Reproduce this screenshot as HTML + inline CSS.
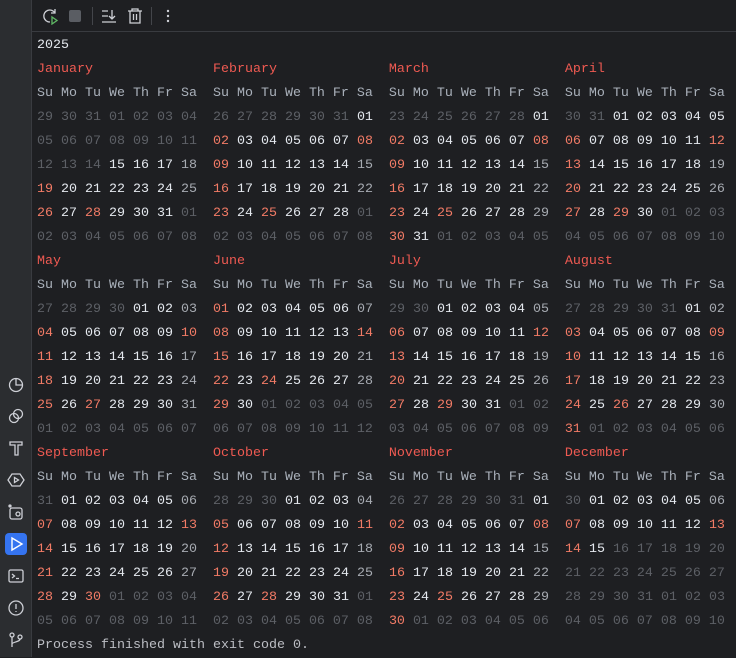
<!DOCTYPE html>
<html><head><meta charset="utf-8"><style>
html,body{margin:0;padding:0;width:736px;height:657px;overflow:hidden;background:#1e1f22;}
#side{position:absolute;left:0;top:0;width:31px;height:657px;background:#2b2d30;border-right:1px solid #393b40;}
#tb{position:absolute;left:32px;top:0;width:704px;height:31px;border-bottom:1px solid #393b40;background:#1e1f22;}
pre{position:absolute;left:37px;top:34px;margin:0;font-family:"Liberation Mono",monospace;font-size:13.333px;line-height:24px;color:#bcbec4;}
g{color:#5d6066}w{color:#e4e8ee}r{color:#f27b66}v{color:#a7abb2}
.m{color:#ef5a52}.h{color:#aab1bb}.y{color:#e4e8ee}
svg{position:absolute;}
</style></head><body>
<div id="side">
<svg style="left:7px;top:376px" width="18" height="18" viewBox="0 0 18 18" fill="none" stroke="#ced0d6" stroke-width="1.3"><circle cx="9" cy="9" r="6.5"/><path d="M9 2.5V9H15.5"/></svg>
<svg style="left:7px;top:407px" width="18" height="18" viewBox="0 0 18 18" fill="none" stroke="#ced0d6" stroke-width="1.3"><circle cx="11" cy="7" r="4.5"/><circle cx="7" cy="11" r="4.5"/></svg>
<svg style="left:7px;top:439px" width="18" height="18" viewBox="0 0 18 18" fill="none" stroke="#ced0d6" stroke-width="1.3"><path d="M3 3H15V6H11V16H8V6H3Z"/></svg>
<svg style="left:7px;top:471px" width="18" height="18" viewBox="0 0 18 18" fill="none" stroke="#ced0d6" stroke-width="1.3"><path d="M5 3H13L17 9L13 15H5L1 9Z"/><path d="M7.5 6.5V11.5L11.5 9Z"/></svg>
<svg style="left:7px;top:503px" width="18" height="18" viewBox="0 0 18 18" fill="none" stroke="#ced0d6" stroke-width="1.3"><rect x="3" y="5" width="12" height="11" rx="2"/><circle cx="11" cy="11" r="2"/><circle cx="3" cy="3" r="1" fill="#ced0d6"/></svg>
<div style="position:absolute;left:5px;top:533px;width:22px;height:22px;background:#3574f0;border-radius:4px"></div>
<svg style="left:7px;top:535px" width="18" height="18" viewBox="0 0 18 18" fill="none" stroke="#fff" stroke-width="1.4"><path d="M5 3V15L15 9Z"/></svg>
<svg style="left:7px;top:567px" width="18" height="18" viewBox="0 0 18 18" fill="none" stroke="#ced0d6" stroke-width="1.3"><rect x="2" y="3" width="14" height="12" rx="1.5"/><path d="M5 7L7.5 9L5 11M9 11.5H12"/></svg>
<svg style="left:7px;top:599px" width="18" height="18" viewBox="0 0 18 18" fill="none" stroke="#ced0d6" stroke-width="1.3"><circle cx="9" cy="9" r="7"/><path d="M9 5V10M9 12V13"/></svg>
<svg style="left:7px;top:631px" width="18" height="18" viewBox="0 0 18 18" fill="none" stroke="#ced0d6" stroke-width="1.3"><circle cx="5" cy="4" r="2"/><circle cx="13" cy="6" r="2"/><path d="M5 6V16M13 8C13 11 5 11 5 13"/></svg>
</div>
<div id="tb">
<svg style="left:9px;top:7px" width="18" height="18" viewBox="0 0 18 18" fill="none" stroke-width="1.3"><path d="M14 6A6 6 0 1 0 9 15" stroke="#ced0d6"/><path d="M14 2V6H10" stroke="#ced0d6"/><path d="M11 10V17L16 13.5Z" stroke="#5fb865"/></svg>
<div style="position:absolute;left:37px;top:10px;width:12px;height:12px;background:#5a5d63;border-radius:2px"></div>
<div style="position:absolute;left:60px;top:7px;width:1px;height:18px;background:#43454a"></div>
<svg style="left:68px;top:7px" width="18" height="18" viewBox="0 0 18 18" fill="none" stroke="#ced0d6" stroke-width="1.3"><path d="M2 4H8M2 9H8M2 15H16M12 3V12M9 9L12 12L15 9"/></svg>
<svg style="left:94px;top:7px" width="18" height="18" viewBox="0 0 18 18" fill="none" stroke="#ced0d6" stroke-width="1.3"><path d="M2 4H16M6 4V2H12V4M4 4V16H14V4M7.5 7V13M10.5 7V13"/></svg>
<div style="position:absolute;left:119px;top:7px;width:1px;height:18px;background:#43454a"></div>
<svg style="left:127px;top:7px" width="18" height="18" viewBox="0 0 18 18" fill="#ced0d6"><circle cx="9" cy="4" r="1.2"/><circle cx="9" cy="9" r="1.2"/><circle cx="9" cy="14" r="1.2"/></svg>
</div>
<pre><span class="y">2025</span>
<span class="m">January               February              March                 April</span>
<span class="h">Su Mo Tu We Th Fr Sa  Su Mo Tu We Th Fr Sa  Su Mo Tu We Th Fr Sa  Su Mo Tu We Th Fr Sa</span>
<g>29 30 31 01 02 03 04  26 27 28 29 30 31 </g><w>01</w>  <g>23 24 25 26 27 28 </g><w>01</w>  <g>30 31 </g><w>01 02 03 04 05</w>
<g>05 06 07 08 09 10 11</g>  <r>02</r> <w>03 04 05 06 07</w> <r>08</r>  <r>02</r> <w>03 04 05 06 07</w> <r>08</r>  <r>06</r> <w>07 08 09 10 11</w> <r>12</r>
<g>12 13 14</g> <w>15 16 17</w> <v>18</v>  <r>09</r> <w>10 11 12 13 14</w> <v>15</v>  <r>09</r> <w>10 11 12 13 14</w> <v>15</v>  <r>13</r> <w>14 15 16 17 18</w> <v>19</v>
<r>19</r> <w>20 21 22 23 24</w> <v>25</v>  <r>16</r> <w>17 18 19 20 21</w> <v>22</v>  <r>16</r> <w>17 18 19 20 21</w> <v>22</v>  <r>20</r> <w>21 22 23 24 25</w> <v>26</v>
<r>26</r> <w>27</w> <r>28</r> <w>29 30 31</w> <g>01</g>  <r>23</r> <w>24</w> <r>25</r> <w>26 27 28</w> <g>01</g>  <r>23</r> <w>24</w> <r>25</r> <w>26 27 28</w> <v>29</v>  <r>27</r> <w>28</w> <r>29</r> <w>30</w> <g>01 02 03</g>
<g>02 03 04 05 06 07 08  02 03 04 05 06 07 08</g>  <r>30</r> <w>31</w> <g>01 02 03 04 05  04 05 06 07 08 09 10</g>
<span class="m">May                   June                  July                  August</span>
<span class="h">Su Mo Tu We Th Fr Sa  Su Mo Tu We Th Fr Sa  Su Mo Tu We Th Fr Sa  Su Mo Tu We Th Fr Sa</span>
<g>27 28 29 30</g> <w>01 02</w> <v>03</v>  <r>01</r> <w>02 03 04 05 06</w> <v>07</v>  <g>29 30</g> <w>01 02 03 04</w> <v>05</v>  <g>27 28 29 30 31</g> <w>01</w> <v>02</v>
<r>04</r> <w>05 06 07 08 09</w> <r>10</r>  <r>08</r> <w>09 10 11 12 13</w> <r>14</r>  <r>06</r> <w>07 08 09 10 11</w> <r>12</r>  <r>03</r> <w>04 05 06 07 08</w> <r>09</r>
<r>11</r> <w>12 13 14 15 16</w> <v>17</v>  <r>15</r> <w>16 17 18 19 20</w> <v>21</v>  <r>13</r> <w>14 15 16 17 18</w> <v>19</v>  <r>10</r> <w>11 12 13 14 15</w> <v>16</v>
<r>18</r> <w>19 20 21 22 23</w> <v>24</v>  <r>22</r> <w>23</w> <r>24</r> <w>25 26 27</w> <v>28</v>  <r>20</r> <w>21 22 23 24 25</w> <v>26</v>  <r>17</r> <w>18 19 20 21 22</w> <v>23</v>
<r>25</r> <w>26</w> <r>27</r> <w>28 29 30</w> <v>31</v>  <r>29</r> <w>30</w> <g>01 02 03 04 05</g>  <r>27</r> <w>28</w> <r>29</r> <w>30 31</w> <g>01 02</g>  <r>24</r> <w>25</w> <r>26</r> <w>27 28 29</w> <v>30</v>
<g>01 02 03 04 05 06 07  06 07 08 09 10 11 12  03 04 05 06 07 08 09</g>  <r>31</r> <g>01 02 03 04 05 06</g>
<span class="m">September             October               November              December</span>
<span class="h">Su Mo Tu We Th Fr Sa  Su Mo Tu We Th Fr Sa  Su Mo Tu We Th Fr Sa  Su Mo Tu We Th Fr Sa</span>
<g>31</g> <w>01 02 03 04 05</w> <v>06</v>  <g>28 29 30</g> <w>01 02 03</w> <v>04</v>  <g>26 27 28 29 30 31</g> <w>01</w>  <g>30</g> <w>01 02 03 04 05</w> <v>06</v>
<r>07</r> <w>08 09 10 11 12</w> <r>13</r>  <r>05</r> <w>06 07 08 09 10</w> <r>11</r>  <r>02</r> <w>03 04 05 06 07</w> <r>08</r>  <r>07</r> <w>08 09 10 11 12</w> <r>13</r>
<r>14</r> <w>15 16 17 18 19</w> <v>20</v>  <r>12</r> <w>13 14 15 16 17</w> <v>18</v>  <r>09</r> <w>10 11 12 13 14</w> <v>15</v>  <r>14</r> <w>15</w> <g>16 17 18 19 20</g>
<r>21</r> <w>22 23 24 25 26</w> <v>27</v>  <r>19</r> <w>20 21 22 23 24</w> <v>25</v>  <r>16</r> <w>17 18 19 20 21</w> <v>22</v>  <g>21 22 23 24 25 26 27</g>
<r>28</r> <w>29</w> <r>30</r> <g>01 02 03 04</g>  <r>26</r> <w>27</w> <r>28</r> <w>29 30 31</w> <g>01</g>  <r>23</r> <w>24</w> <r>25</r> <w>26 27 28</w> <v>29</v>  <g>28 29 30 31 01 02 03</g>
<g>05 06 07 08 09 10 11  02 03 04 05 06 07 08</g>  <r>30</r> <g>01 02 03 04 05 06  04 05 06 07 08 09 10</g>
Process finished with exit code 0.</pre>
</body></html>
